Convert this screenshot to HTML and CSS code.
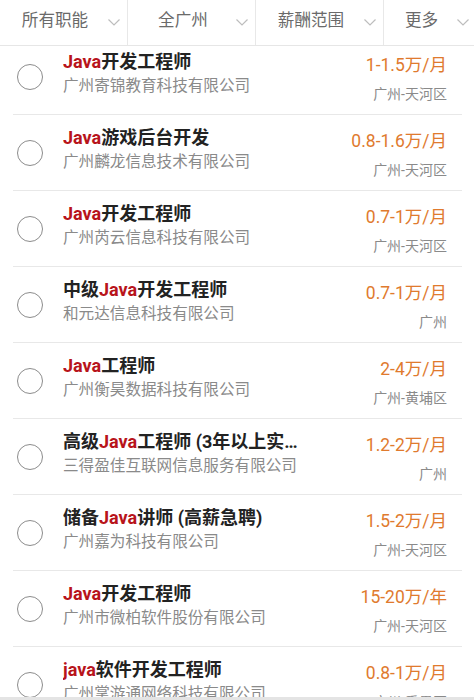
FILE: index.html
```html
<!DOCTYPE html>
<html lang="zh-CN">
<head>
<meta charset="utf-8">
<title>职位列表</title>
<link rel="stylesheet" href="styles.css">
</head>
<body>
<div class="screen">
  <div class="filters">
    <div class="filter"><span class="filter-label">所有职能</span><svg class="chev" width="12" height="7" viewBox="0 0 12 7"><path d="M0.5 0.5 L6 6 L11.5 0.5" fill="none" stroke="#bdbdbd" stroke-width="1.2"/></svg></div>
    <div class="filter"><span class="filter-label">全广州</span><svg class="chev" width="12" height="7" viewBox="0 0 12 7"><path d="M0.5 0.5 L6 6 L11.5 0.5" fill="none" stroke="#bdbdbd" stroke-width="1.2"/></svg></div>
    <div class="filter"><span class="filter-label">薪酬范围</span><svg class="chev" width="12" height="7" viewBox="0 0 12 7"><path d="M0.5 0.5 L6 6 L11.5 0.5" fill="none" stroke="#bdbdbd" stroke-width="1.2"/></svg></div>
    <div class="filter filter-last"><span class="filter-label">更多</span><svg class="chev" width="12" height="7" viewBox="0 0 12 7"><path d="M0.5 0.5 L6 6 L11.5 0.5" fill="none" stroke="#bdbdbd" stroke-width="1.2"/></svg></div>
  </div>

  <div class="list">
    <div class="job"><div class="job-inner">
      <span class="radio"></span>
      <div class="info"><div class="title"><em>Java</em>开发工程师</div><div class="company">广州寄锦教育科技有限公司</div></div>
      <div class="meta"><div class="salary">1-1.5万/月</div><div class="place">广州-天河区</div></div>
    </div></div>
    <div class="job"><div class="job-inner">
      <span class="radio"></span>
      <div class="info"><div class="title"><em>Java</em>游戏后台开发</div><div class="company">广州麟龙信息技术有限公司</div></div>
      <div class="meta"><div class="salary">0.8-1.6万/月</div><div class="place">广州-天河区</div></div>
    </div></div>
    <div class="job"><div class="job-inner">
      <span class="radio"></span>
      <div class="info"><div class="title"><em>Java</em>开发工程师</div><div class="company">广州芮云信息科技有限公司</div></div>
      <div class="meta"><div class="salary">0.7-1万/月</div><div class="place">广州-天河区</div></div>
    </div></div>
    <div class="job"><div class="job-inner">
      <span class="radio"></span>
      <div class="info"><div class="title">中级<em>Java</em>开发工程师</div><div class="company">和元达信息科技有限公司</div></div>
      <div class="meta"><div class="salary">0.7-1万/月</div><div class="place">广州</div></div>
    </div></div>
    <div class="job"><div class="job-inner">
      <span class="radio"></span>
      <div class="info"><div class="title"><em>Java</em>工程师</div><div class="company">广州衡昊数据科技有限公司</div></div>
      <div class="meta"><div class="salary">2-4万/月</div><div class="place">广州-黄埔区</div></div>
    </div></div>
    <div class="job"><div class="job-inner">
      <span class="radio"></span>
      <div class="info"><div class="title">高级<em>Java</em>工程师 (3年以上实践经验)</div><div class="company">三得盈佳互联网信息服务有限公司</div></div>
      <div class="meta"><div class="salary">1.2-2万/月</div><div class="place">广州</div></div>
    </div></div>
    <div class="job"><div class="job-inner">
      <span class="radio"></span>
      <div class="info"><div class="title">储备<em>Java</em>讲师 (高薪急聘)</div><div class="company">广州嘉为科技有限公司</div></div>
      <div class="meta"><div class="salary">1.5-2万/月</div><div class="place">广州-天河区</div></div>
    </div></div>
    <div class="job"><div class="job-inner">
      <span class="radio"></span>
      <div class="info"><div class="title"><em>Java</em>开发工程师</div><div class="company">广州市微柏软件股份有限公司</div></div>
      <div class="meta"><div class="salary">15-20万/年</div><div class="place">广州-天河区</div></div>
    </div></div>
    <div class="job"><div class="job-inner">
      <span class="radio"></span>
      <div class="info"><div class="title"><em>java</em>软件开发工程师</div><div class="company">广州掌游通网络科技有限公司</div></div>
      <div class="meta"><div class="salary">0.8-1万/月</div><div class="place">广州-番禺区</div></div>
    </div></div>
  </div>
  <div class="bottom-shade"></div>
</div>
</body>
</html>
```

FILE: styles.css
```css
* { box-sizing: border-box; }
html, body { margin: 0; padding: 0; background: #fff; }
body {
  font-family: Roboto, "Noto Sans CJK SC", "Noto Sans", sans-serif;
  color: #222;
}
.screen {
  width: 474px;
  height: 700px;
  overflow: hidden;
  position: relative;
  background: #fff;
}
.filters {
  position: relative;
  z-index: 2;
  display: flex;
  height: 46px;
  background: #fff;
  border-bottom: 1px solid #e6e6e6;
}
.filter {
  width: 128px;
  flex: none;
  display: flex;
  align-items: center;
  border-right: 1px solid #e8e8e8;
  padding-bottom: 3px;
}
.filter-last { flex: 1; width: auto; border-right: none; }
.filter-label {
  flex: 1;
  text-align: center;
  font-size: 16.6px;
  color: #6a6a6a;
  line-height: 22px;
  padding-left: 2px;
}
.chev { flex: none; margin-right: 7px; margin-top: 2px; }
.filter-last .chev { margin-right: 5px; }

.list { margin-top: -7px; position: relative; z-index: 1; }
.job { padding: 0 12px 0 13px; }
.job-inner {
  display: flex;
  align-items: flex-start;
  height: 76px;
  border-bottom: 1px solid #e8e8e8;
}
.radio {
  flex: none;
  align-self: center;
  width: 26px;
  height: 26px;
  margin-left: 3.5px;
  border: 1.6px solid #8c8c8c;
  border-radius: 50%;
}
.info {
  width: 242px;
  margin-left: 20.5px;
  padding-top: 11px;
  min-width: 0;
}
.title {
  font-size: 18px;
  font-weight: bold;
  line-height: 24px;
  color: #222;
  white-space: nowrap;
  overflow: hidden;
  text-overflow: ellipsis;
}
.title em { font-style: normal; color: #b8141b; }
.company {
  font-size: 15.6px;
  line-height: 24px;
  color: #8a8a8a;
  white-space: nowrap;
}
.meta {
  flex: 1;
  text-align: right;
  padding-top: 14px;
  padding-right: 15px;
}
.salary {
  font-size: 17.5px;
  line-height: 24px;
  color: #e07a2e;
  white-space: nowrap;
}
.place {
  font-size: 14px;
  line-height: 20px;
  margin-top: 7px;
  color: #8a8a8a;
  white-space: nowrap;
}
.bottom-shade {
  position: absolute;
  left: 0;
  right: 0;
  bottom: 0;
  height: 3px;
  z-index: 3;
  background: #e4e4e4;
}
```
